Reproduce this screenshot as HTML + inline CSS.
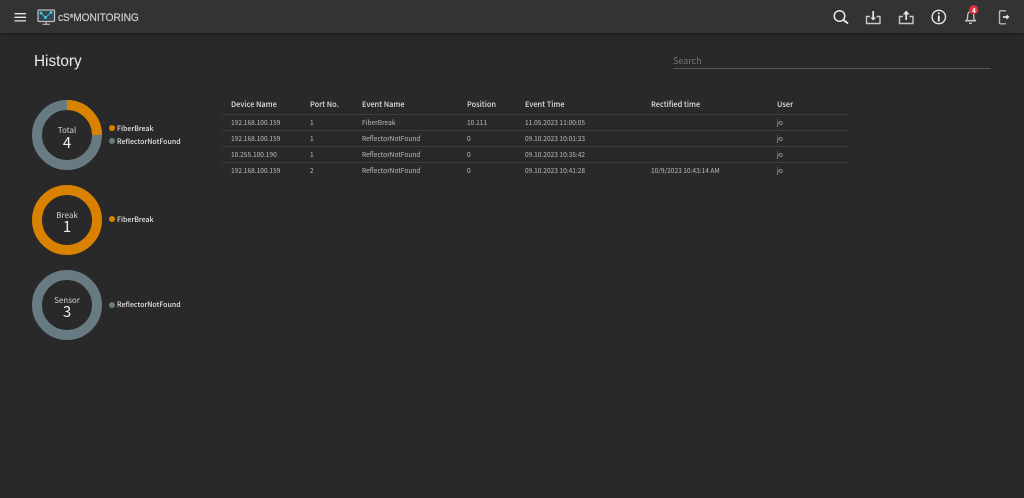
<!DOCTYPE html>
<html><head><meta charset="utf-8">
<style>
html,body{margin:0;padding:0;width:1024px;height:498px;overflow:hidden;background:#292929;font-family:"Noto Sans CJK SC","Liberation Sans",sans-serif}
.t{position:absolute;white-space:nowrap;line-height:10px}
.h{font-size:7.4px;color:#e0e0e0;top:100px;font-weight:500}
.c{font-size:6.6px;color:#bdbdbd}
.l{position:absolute;left:222px;width:626px;height:1px;background:#3c3c3c}
.lg{font-size:7px;color:#e4e4e4;font-weight:500}
.v{left:32px;width:70px;text-align:center;font-size:8px;color:#d4d4d4}
.n{left:32px;width:70px;text-align:center;font-size:15px;color:#eee;line-height:12px}
.dot{position:absolute;width:6px;height:6px;border-radius:50%}
#bar{position:absolute;left:0;top:0;width:1024px;height:33px;background:#333;box-shadow:0 1px 3px rgba(0,0,0,.45)}
svg{position:absolute;overflow:visible}
</style></head><body>
<div id="bar"></div>
<svg style="left:0;top:0" width="1024" height="34" fill="none" stroke="#e6e6e6">
 <path d="M14.500 13.700h11.500M14.500 17.300h11.500M14.500 20.900h11.500" stroke-width="1.300"/>
 <rect x="38" y="10" width="16.500" height="11.500" rx="1" fill="#2f4a52" stroke="#bdbdbd" stroke-width="1.300"/>
 <path d="M46.200 22v2M42.500 24.300h7.500" stroke="#b8b8b8" stroke-width="1.200"/>
 <path d="M41 13l4.500 4.500 5.500-5" stroke="#45b6cf" stroke-width="1"/>
 <circle cx="41" cy="13" r="1.400" fill="#55c6df" stroke="none"/><circle cx="45.500" cy="17.500" r="1.400" fill="#55c6df" stroke="none"/><circle cx="51" cy="12.500" r="1.400" fill="#55c6df" stroke="none"/>
 <circle cx="839.500" cy="16" r="5.300" stroke-width="1.500"/><path d="M843.500 20l4.500 3.500" stroke-width="1.900"/>
 <path d="M870 16.500h-3.500v7h13.500v-7h-3.500" stroke-width="1.400" stroke="#c8c8c8"/><path d="M873.200 11v7" stroke-width="1.700"/><path d="M870.300 17.500h5.800l-2.900 3z" fill="#e6e6e6" stroke="none"/>
 <path d="M903 16.500h-3.500v7h13.500v-7h-3.500" stroke-width="1.400" stroke="#c8c8c8"/><path d="M906.200 13.500v6.500" stroke-width="1.700"/><path d="M902.800 14.500l3.400-4 3.400 4z" fill="#e6e6e6" stroke="none"/>
 <circle cx="938.800" cy="17" r="6.700" stroke-width="1.400"/><path d="M938.800 15.500v6M938.800 12.500v1.800" stroke-width="1.900"/>
 <path d="M966.500 20.500c1.500-1.500 1-3.500 1.200-5.500.2-2 1.400-3.500 3-3.500s2.800 1.500 3 3.500c.2 2-.3 4 1.200 5.500z" stroke-width="1.300" stroke="#c8c8c8"/><path d="M965 20.800h11M969 23.300h2.800" stroke-width="1.300" stroke="#c8c8c8"/>
 <circle cx="973.700" cy="9.700" r="4.600" fill="#e5303d" stroke="none"/>
 <path d="M1006 10.800h-5.500a1 1 0 0 0-1 1v11a1 1 0 0 0 1 1h5.500" stroke-width="1.400" stroke="#b8b8b8"/><path d="M1003 17h4" stroke-width="1.700"/><path d="M1006.500 14.300l3 2.700-3 2.700z" fill="#e6e6e6" stroke="none"/>
</svg>
<div class="t" style="left:58px;top:12px;font-family:'Liberation Sans',sans-serif;font-size:11px;color:#cdcdcd;-webkit-text-stroke:.2px #cdcdcd;transform-origin:left;transform:scaleX(.92)">cS<span style="font-size:5px;vertical-align:3px">®</span>MONITORING</div>
<div class="t" style="left:972px;top:5.500px;font-size:6.500px;font-weight:bold;color:#fff;line-height:8px">4</div>

<div class="t" style="left:34px;top:54px;font-family:'Liberation Sans',sans-serif;font-size:15.300px;line-height:16px;color:#ececec">History</div>
<div class="t" style="left:673px;top:56px;font-size:9px;color:#757575">Search</div>
<div style="position:absolute;left:673px;top:68px;width:318px;height:1px;background:#555"></div>

<svg style="left:0;top:0" width="220" height="350" fill="none" stroke-width="10">
 <circle cx="67" cy="135" r="30" stroke="#687a82"/>
 <path d="M67 105A30 30 0 0 1 97 135" stroke="#d98200"/>
 <circle cx="67" cy="220" r="30" stroke="#d98200"/>
 <circle cx="67" cy="305" r="30" stroke="#687a82"/>
</svg>
<div class="t v" style="top:126px">Total</div>
<div class="t n" style="top:136.500px">4</div>
<div class="t v" style="top:211px">Break</div>
<div class="t n" style="top:221px">1</div>
<div class="t v" style="top:296px">Sensor</div>
<div class="t n" style="top:306px">3</div>

<div class="dot" style="left:109px;top:125px;background:#d98200"></div><div class="t lg" style="left:117px;top:123.500px">FiberBreak</div>
<div class="dot" style="left:109px;top:138px;background:#687a82"></div><div class="t lg" style="left:117px;top:136.500px">ReflectorNotFound</div>
<div class="dot" style="left:109px;top:216px;background:#d98200"></div><div class="t lg" style="left:117px;top:214.500px">FiberBreak</div>
<div class="dot" style="left:109px;top:302px;background:#687a82"></div><div class="t lg" style="left:117px;top:300px">ReflectorNotFound</div>

<div class="t h" style="left:231px">Device Name</div>
<div class="t h" style="left:310px">Port No.</div>
<div class="t h" style="left:362px">Event Name</div>
<div class="t h" style="left:467px">Position</div>
<div class="t h" style="left:525px">Event Time</div>
<div class="t h" style="left:651px">Rectified time</div>
<div class="t h" style="left:777px">User</div>

<div class="l" style="top:114px"></div><div class="l" style="top:130px"></div><div class="l" style="top:146px"></div><div class="l" style="top:162px"></div>

<div class="t c" style="left:231px;top:117px">192.168.100.159</div>
<div class="t c" style="left:310px;top:117px">1</div>
<div class="t c" style="left:362px;top:117px">FiberBreak</div>
<div class="t c" style="left:467px;top:117px">10.111</div>
<div class="t c" style="left:525px;top:117px">11.05.2023 11:00:05</div>
<div class="t c" style="left:777px;top:117px">jo</div>

<div class="t c" style="left:231px;top:133px">192.168.100.159</div>
<div class="t c" style="left:310px;top:133px">1</div>
<div class="t c" style="left:362px;top:133px">ReflectorNotFound</div>
<div class="t c" style="left:467px;top:133px">0</div>
<div class="t c" style="left:525px;top:133px">09.10.2023 10:01:33</div>
<div class="t c" style="left:777px;top:133px">jo</div>

<div class="t c" style="left:231px;top:149px">10.255.100.190</div>
<div class="t c" style="left:310px;top:149px">1</div>
<div class="t c" style="left:362px;top:149px">ReflectorNotFound</div>
<div class="t c" style="left:467px;top:149px">0</div>
<div class="t c" style="left:525px;top:149px">09.10.2023 10:35:42</div>
<div class="t c" style="left:777px;top:149px">jo</div>

<div class="t c" style="left:231px;top:165px">192.168.100.159</div>
<div class="t c" style="left:310px;top:165px">2</div>
<div class="t c" style="left:362px;top:165px">ReflectorNotFound</div>
<div class="t c" style="left:467px;top:165px">0</div>
<div class="t c" style="left:525px;top:165px">09.10.2023 10:41:28</div>
<div class="t c" style="left:651px;top:165px">10/9/2023 10:43:14 AM</div>
<div class="t c" style="left:777px;top:165px">jo</div>
</body></html>
